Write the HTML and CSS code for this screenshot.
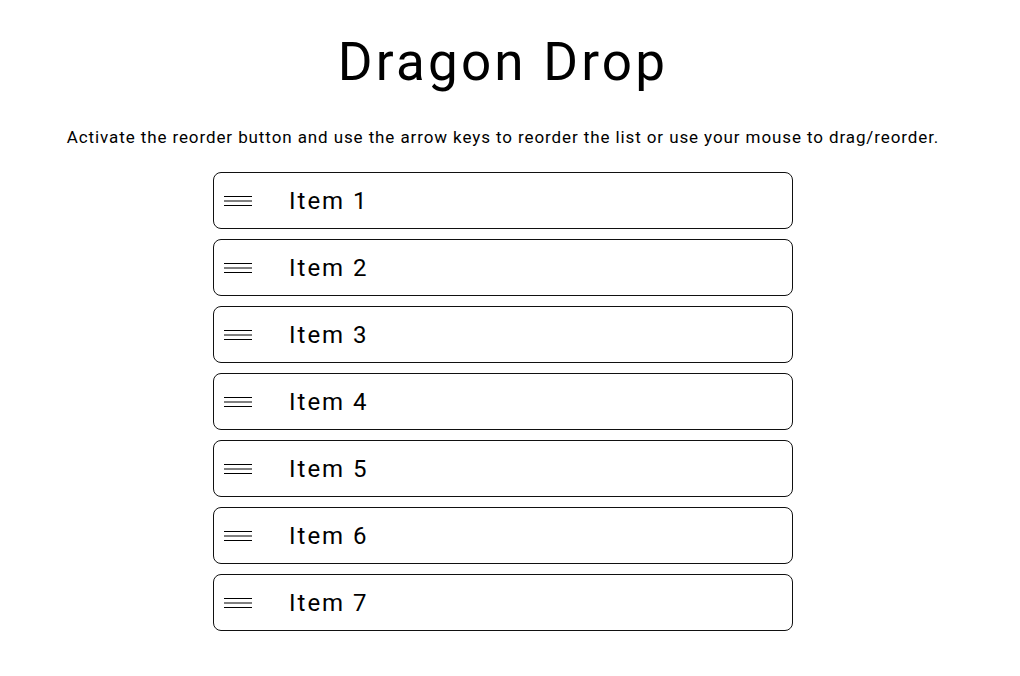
FILE: index.html
```html
<!DOCTYPE html>
<html lang="en">
<head>
<meta charset="utf-8">
<title>Dragon Drop</title>
<link rel="stylesheet" href="styles.css">
</head>
<body>
<main class="page">
  <h1 class="title">Dragon Drop</h1>
  <p class="intro">Activate the reorder button and use the arrow keys to reorder the list or use your mouse to drag/reorder.</p>
  <ul class="list">
    <li class="item"><span class="handle"><svg width="28" height="10" viewBox="0 0 28 10"><path d="M0 0.5H28M0 5H28M0 9.5H28" stroke="#000" stroke-width="1"/></svg></span><span class="label">Item 1</span></li>
    <li class="item"><span class="handle"><svg width="28" height="10" viewBox="0 0 28 10"><path d="M0 0.5H28M0 5H28M0 9.5H28" stroke="#000" stroke-width="1"/></svg></span><span class="label">Item 2</span></li>
    <li class="item"><span class="handle"><svg width="28" height="10" viewBox="0 0 28 10"><path d="M0 0.5H28M0 5H28M0 9.5H28" stroke="#000" stroke-width="1"/></svg></span><span class="label">Item 3</span></li>
    <li class="item"><span class="handle"><svg width="28" height="10" viewBox="0 0 28 10"><path d="M0 0.5H28M0 5H28M0 9.5H28" stroke="#000" stroke-width="1"/></svg></span><span class="label">Item 4</span></li>
    <li class="item"><span class="handle"><svg width="28" height="10" viewBox="0 0 28 10"><path d="M0 0.5H28M0 5H28M0 9.5H28" stroke="#000" stroke-width="1"/></svg></span><span class="label">Item 5</span></li>
    <li class="item"><span class="handle"><svg width="28" height="10" viewBox="0 0 28 10"><path d="M0 0.5H28M0 5H28M0 9.5H28" stroke="#000" stroke-width="1"/></svg></span><span class="label">Item 6</span></li>
    <li class="item"><span class="handle"><svg width="28" height="10" viewBox="0 0 28 10"><path d="M0 0.5H28M0 5H28M0 9.5H28" stroke="#000" stroke-width="1"/></svg></span><span class="label">Item 7</span></li>
  </ul>
</main>
</body>
</html>
```
FILE: styles.css
```css
html, body {
  margin: 0;
  padding: 0;
  background: #fff;
  color: #000;
  font-family: Roboto, "Liberation Sans", sans-serif;
}
.page {
  width: 1006px;
  display: flex;
  flex-direction: column;
  align-items: center;
}
.title {
  margin: 30px 0 0;
  font-size: 53px;
  line-height: 64px;
  font-weight: 400;
  letter-spacing: 3.2px;
}
.intro {
  margin: 33px 0 0;
  font-size: 17px;
  line-height: 20px;
  letter-spacing: 0.9px;
  white-space: nowrap;
}
.list {
  list-style: none;
  margin: 25px 0 0;
  padding: 0;
  width: 580px;
  display: flex;
  flex-direction: column;
  gap: 10px;
}
.item {
  box-sizing: border-box;
  height: 57px;
  border: 1px solid #111;
  border-radius: 8px;
  display: flex;
  align-items: center;
  padding-left: 10px;
}
.handle {
  display: flex;
  width: 28px;
  height: 10px;
  margin-right: 37px;
}
.label {
  font-size: 24px;
  line-height: 28px;
  letter-spacing: 2px;
}
```
